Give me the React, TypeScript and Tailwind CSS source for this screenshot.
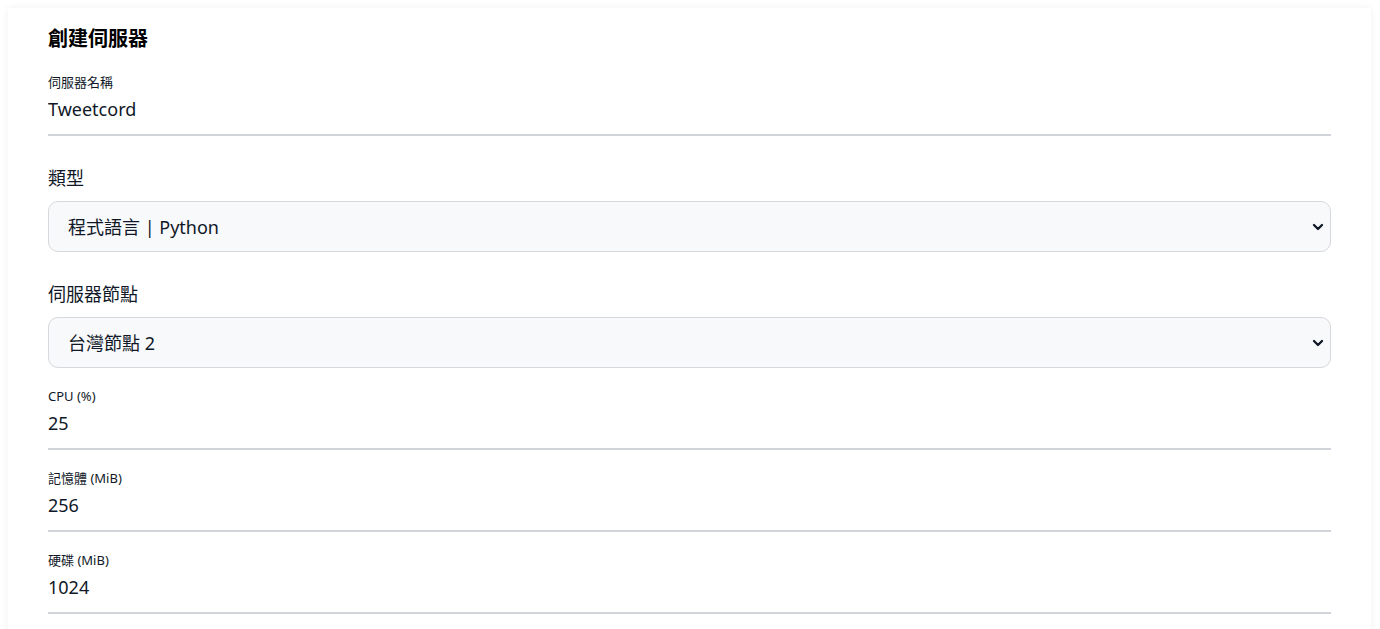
import { ChevronDown } from "lucide-react";

const font = { fontFamily: '"Noto Sans", "Noto Sans CJK TC", sans-serif' };

function TextField({ label, value }: { label: string; value: string }) {
  return (
    <div className="flex flex-col">
      <label className="text-[13px] leading-4 text-gray-900">{label}</label>
      <input
        defaultValue={value}
        className="pt-[5px] pb-[11px] text-lg leading-7 text-gray-900 border-b-2 border-[#d1d5db] bg-transparent outline-none"
        style={font}
      />
    </div>
  );
}

function SelectField({ label, value }: { label: string; value: string }) {
  return (
    <div className="flex flex-col pt-2">
      <label className="mb-[9px] text-lg leading-7 text-gray-900">{label}</label>
      <div className="relative">
        <select
          defaultValue={value}
          className="w-full h-[51px] appearance-none rounded-[10px] border border-[#d6d8dc] bg-[#f8f9fa] pl-[19px] pr-10 text-lg text-gray-900 outline-none"
          style={font}
        >
          <option>{value}</option>
        </select>
        {/* arrow */}
        <ChevronDown
          className="absolute right-[5px] top-1/2 -translate-y-1/2 w-4 h-4 text-gray-900 pointer-events-none"
          strokeWidth={3.5}
        />
      </div>
    </div>
  );
}

export default function App() {
  return (
    <div className="min-h-screen bg-white overflow-hidden" style={font}>
      <div className="mt-2 ml-2 mr-[9px] bg-white shadow-[0_0_8px_rgba(0,0,0,0.06)] px-10 pt-[17px] pb-10">
        <h2 className="text-xl leading-7 font-bold text-black mb-[21px]">創建伺服器</h2>
        <div className="flex flex-col gap-5">
          <TextField label="伺服器名稱" value="Tweetcord" />
          <SelectField label="類型" value="程式語言 | Python" />
          <SelectField label="伺服器節點" value="台灣節點 2" />
          <TextField label="CPU (%)" value="25" />
          <TextField label="記憶體 (MiB)" value="256" />
          <TextField label="硬碟 (MiB)" value="1024" />
        </div>
      </div>
    </div>
  );
}
